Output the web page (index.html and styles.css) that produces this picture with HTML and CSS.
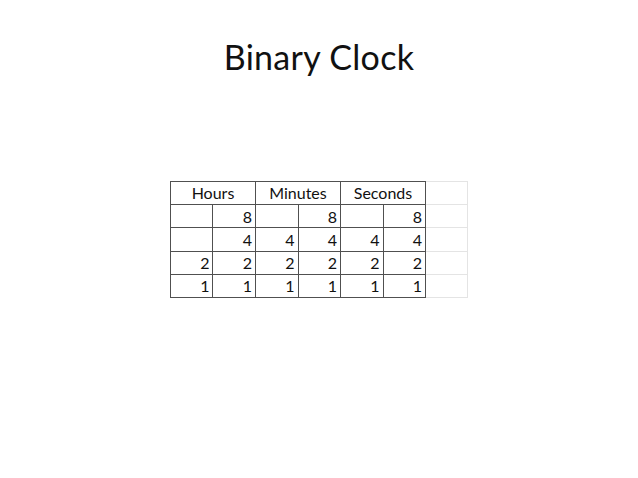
FILE: index.html
```html
<!DOCTYPE html>
<html>
<head>
<meta charset="utf-8">
<link rel="stylesheet" href="styles.css">
</head>
<body>
<div class="slide">
  <h1 class="title">Binary Clock</h1>
  <table class="clock">
    <colgroup>
      <col class="c"><col class="c"><col class="c"><col class="c"><col class="c"><col class="c"><col class="g">
    </colgroup>
    <tr class="head">
      <td colspan="2">Hours</td>
      <td colspan="2">Minutes</td>
      <td colspan="2">Seconds</td>
      <td class="ghost"></td>
    </tr>
    <tr><td></td><td>8</td><td></td><td>8</td><td></td><td>8</td><td class="ghost"></td></tr>
    <tr><td></td><td>4</td><td>4</td><td>4</td><td>4</td><td>4</td><td class="ghost"></td></tr>
    <tr><td>2</td><td>2</td><td>2</td><td>2</td><td>2</td><td>2</td><td class="ghost"></td></tr>
    <tr><td>1</td><td>1</td><td>1</td><td>1</td><td>1</td><td>1</td><td class="ghost"></td></tr>
  </table>
</div>
</body>
</html>
```
FILE: styles.css
```css
html, body {
  margin: 0;
  padding: 0;
  background: #fff;
}
.slide {
  width: 638px;
  height: 478px;
  display: flex;
  flex-direction: column;
  align-items: center;
  font-family: "Lato", "Open Sans", sans-serif;
  color: #111;
}
.title {
  margin: 37px 0 0;
  font-weight: 400;
  font-size: 34px;
  line-height: 40px;
  letter-spacing: 0.3px;
}
.clock {
  margin-top: 104px;
  margin-left: 0;
  border-collapse: collapse;
  table-layout: fixed;
  width: 297px;
  font-size: 16px;
}
.clock col.c { width: 42.5px; }
.clock col.g { width: 42px; }
.clock tr { height: 23.2px; }
.clock td {
  padding: 1px 3px 0 0;
  border: 1px solid #505050;
  text-align: right;
  line-height: 20px;
}
.clock .head td {
  text-align: center;
  padding: 0;
}
.clock td.ghost {
  border: 1px solid #e4e4e4;
}
.clock tr td:nth-child(6) {
  border-right-color: #505050;
}
```
